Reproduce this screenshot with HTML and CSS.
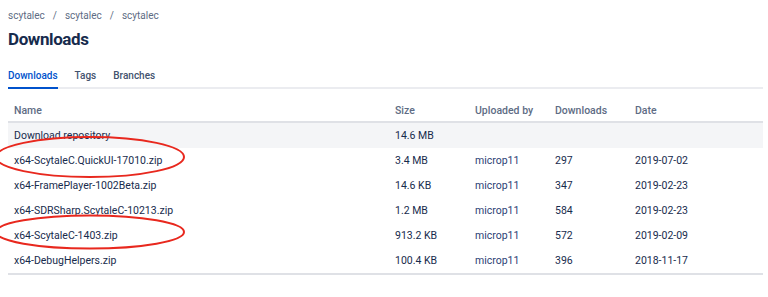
FILE: index.html
```html
<!DOCTYPE html>
<html lang="en">
<head>
    <meta charset="UTF-8">
    <meta name="viewport" content="width=device-width, initial-scale=1.0">
    <title>Downloads - scytalec</title>
    <link rel="stylesheet" href="styles.css">
</head>
<body>
    <div class="page">
        <div class="breadcrumbs">
            <a href="#">scytalec</a>
            <span class="sep">/</span>
            <a href="#">scytalec</a>
            <span class="sep">/</span>
            <a href="#">scytalec</a>
        </div>

        <h1>Downloads</h1>

        <div class="tabs">
            <a href="#" class="tab active">Downloads</a>
            <a href="#" class="tab">Tags</a>
            <a href="#" class="tab">Branches</a>
        </div>

        <table class="downloads">
            <colgroup>
                <col class="col-name">
                <col class="col-size">
                <col class="col-user">
                <col class="col-count">
                <col class="col-date">
            </colgroup>
            <thead>
                <tr>
                    <th>Name</th>
                    <th>Size</th>
                    <th>Uploaded by</th>
                    <th>Downloads</th>
                    <th>Date</th>
                </tr>
            </thead>
            <tbody>
                <tr class="repo-row">
                    <td><a href="#">Download repository</a></td>
                    <td>14.6 MB</td>
                    <td></td>
                    <td></td>
                    <td></td>
                </tr>
                <tr>
                    <td><a href="#">x64-ScytaleC.QuickUI-17010.zip</a></td>
                    <td>3.4 MB</td>
                    <td><a href="#" class="user">microp11</a></td>
                    <td>297</td>
                    <td>2019-07-02</td>
                </tr>
                <tr>
                    <td><a href="#">x64-FramePlayer-1002Beta.zip</a></td>
                    <td>14.6 KB</td>
                    <td><a href="#" class="user">microp11</a></td>
                    <td>347</td>
                    <td>2019-02-23</td>
                </tr>
                <tr>
                    <td><a href="#">x64-SDRSharp.ScytaleC-10213.zip</a></td>
                    <td>1.2 MB</td>
                    <td><a href="#" class="user">microp11</a></td>
                    <td>584</td>
                    <td>2019-02-23</td>
                </tr>
                <tr>
                    <td><a href="#">x64-ScytaleC-1403.zip</a></td>
                    <td>913.2 KB</td>
                    <td><a href="#" class="user">microp11</a></td>
                    <td>572</td>
                    <td>2019-02-09</td>
                </tr>
                <tr>
                    <td><a href="#">x64-DebugHelpers.zip</a></td>
                    <td>100.4 KB</td>
                    <td><a href="#" class="user">microp11</a></td>
                    <td>396</td>
                    <td>2018-11-17</td>
                </tr>
            </tbody>
        </table>
    </div>

    <!-- hand-drawn annotation marks over the list -->
    <svg class="marks" width="768" height="297" viewBox="0 0 768 297">
        <ellipse cx="90" cy="157" rx="94" ry="20" />
        <ellipse cx="90" cy="232" rx="94" ry="16.5" />
    </svg>
</body>
</html>
```

FILE: styles.css
```css
:root {
    --text: #172b4d;
    --subtle: #5e6c84;
    --link: #0052cc;
    --border: #dfe1e6;
    --row-bg: #f4f5f7;
}

* {
    margin: 0;
    padding: 0;
    box-sizing: border-box;
}

body {
    font-family: Roboto, "Liberation Sans", sans-serif;
    color: var(--text);
    background: #fff;
    position: relative;
    width: 768px;
    height: 297px;
    overflow: hidden;
}

a {
    color: inherit;
    text-decoration: none;
}

.page {
    padding: 8px 5px 0 8px;
}

.breadcrumbs {
    display: flex;
    gap: 8px;
    font-size: 10px;
    line-height: 15px;
    color: var(--subtle);
}

h1 {
    margin-top: 4px;
    font-size: 17px;
    line-height: 24px;
    font-weight: 700;
    letter-spacing: -0.4px;
    color: var(--text);
}

.tabs {
    display: flex;
    gap: 17px;
    margin-top: 17px;
    border-bottom: 2px solid #ebecf0;
}

.tab {
    font-size: 10px;
    line-height: 16px;
    font-weight: 500;
    color: #42526e;
    padding-bottom: 3px;
    border-bottom: 2px solid transparent;
    margin-bottom: -2px;
}

.tab.active {
    color: var(--link);
    border-bottom-color: var(--link);
}

.downloads {
    width: 100%;
    margin-top: 10px;
    border-collapse: collapse;
    font-size: 10.5px;
    border-bottom: 2px solid var(--border);
}

.col-name { width: 381px; }
.col-size { width: 80px; }
.col-user { width: 80px; }
.col-count { width: 80px; }

.downloads th {
    text-align: left;
    font-weight: 500;
    color: var(--subtle);
    line-height: 16px;
    padding: 4px 6px 2px;
    border-bottom: 2px solid var(--border);
    white-space: nowrap;
}

.downloads td {
    line-height: 17px;
    padding: 4px 6px;
    white-space: nowrap;
}

.downloads td a {
    color: var(--text);
}

.downloads td a.user {
    color: #2b4175;
}

.repo-row td {
    background: var(--row-bg);
}

.marks {
    position: absolute;
    top: 0;
    left: 0;
    pointer-events: none;
}

.marks ellipse {
    fill: none;
    stroke: #e8281e;
    stroke-width: 2;
}
```
